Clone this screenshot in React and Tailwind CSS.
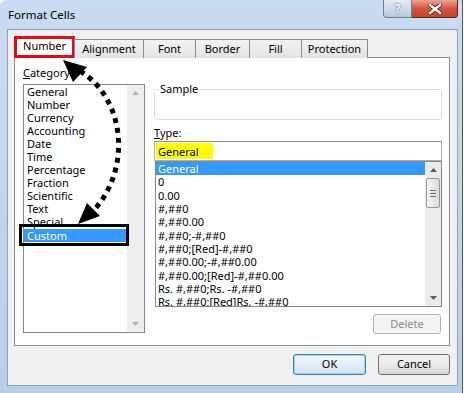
const categories = [
  'General', 'Number', 'Currency', 'Accounting', 'Date', 'Time',
  'Percentage', 'Fraction', 'Scientific', 'Text', 'Special', 'Custom',
];

const types = [
  'General', '0', '0.00', '#,##0', '#,##0.00', '#,##0;-#,##0',
  '#,##0;[Red]-#,##0', '#,##0.00;-#,##0.00', '#,##0.00;[Red]-#,##0.00',
  'Rs. #,##0;Rs. -#,##0', 'Rs. #,##0;[Red]Rs. -#,##0',
];

const tabs = [
  { label: 'Alignment', w: 'w-[70px]' },
  { label: 'Font', w: 'w-[53px]' },
  { label: 'Border', w: 'w-[55px]' },
  { label: 'Fill', w: 'w-[53px]' },
  { label: 'Protection', w: 'w-[67px]' },
];

const Arrow = ({ up, dim }) => (
  <svg width="7" height="4" viewBox="0 0 7 4" className="mx-auto">
    <path d={up ? 'M0 4 L3.5 0 L7 4 Z' : 'M0 0 L3.5 4 L7 0 Z'} fill={dim ? '#b4b4b4' : '#5a5a5a'} />
  </svg>
);

const App = () => {
  return (
    <div
      className="relative w-[467px] h-[393px] bg-white overflow-hidden text-[11px] text-black"
      style={{ fontFamily: '"Noto Sans", "Segoe UI", sans-serif' }}
    >
      <div className="flex flex-col w-[463px] h-[393px] bg-gradient-to-b from-[#c9dcf1] via-[#c2d6ed] to-[#b9cfe8] border-r border-[#4a5566] rounded-tl-[6px]">
        {/* Title bar */}
        <div className="flex h-[29px] shrink-0">
          <div className="pl-[8px] pt-[7px] leading-[16px] text-[11.5px] text-black">Format Cells</div>
          <div className="ml-auto mr-[4px] flex h-[18px]">
            <div className="w-[29px] h-full flex items-center justify-center border border-t-0 border-[#6b7f96] rounded-bl-[4px] bg-gradient-to-b from-[#e3ebf5] via-[#cfdbea] to-[#b6c9df] text-[12px] font-bold text-[#f5f8fb] [text-shadow:0_0_2px_#30455e]">
              ?
            </div>
            <div className="w-[46px] h-full flex items-center justify-center border border-t-0 border-l-0 border-[#5b2620] rounded-br-[4px] bg-gradient-to-b from-[#e8a496] via-[#d2553f] to-[#c8432c]">
              <svg width="14" height="10" viewBox="0 0 14 10">
                <path d="M2 1 L12 9 M12 1 L2 9" stroke="#4a1a12" strokeWidth="4" strokeLinecap="square" />
                <path d="M2 1 L12 9 M12 1 L2 9" stroke="#ffffff" strokeWidth="2.4" strokeLinecap="square" />
              </svg>
            </div>
          </div>
        </div>

        {/* Client area */}
        <div className="ml-[7px] mr-[4px] h-[357px] bg-[#f0f0f0] border border-[#8ea3bb] pt-[7px] pl-[6px] pr-[7px]">
          {/* Tabs */}
          <div className="flex items-end h-[21px] relative z-10">
            <div className="w-[61px] h-[22px] bg-white border-[3px] border-[#e00d16] flex items-center justify-center pb-[1px]">
              Number
            </div>
            {tabs.map((t) => (
              <div
                key={t.label}
                className={`${t.w} h-[19px] -ml-px first:ml-0 flex items-center justify-center border border-b-0 border-[#898c95] bg-gradient-to-b from-[#f2f2f2] to-[#e3e3e3]`}
              >
                {t.label}
              </div>
            ))}
          </div>

          {/* Tab panel */}
          <div className="relative -mt-px h-[289px] bg-white border border-[#898c95] flex">
            {/* Category column */}
            <div className="ml-[8px] pt-[8px] w-[122px]">
              <div className="leading-[13px]">
                <span className="underline">C</span>ategory:
              </div>
              <div className="mt-[5px] h-[249px] border border-[#828790] flex">
                <div className="flex-1 pt-0">
                  {categories.map((c) => (
                    <div
                      key={c}
                      className={`relative h-[13px] leading-[13px] pl-[3px] ${c === 'Custom' ? 'bg-[#3399ff] text-white mt-[1px]' : ''}`}
                    >
                      {c}
                      {c === 'Custom' && (
                        <span className="absolute -left-[5px] -right-[2px] -top-[5px] -bottom-[4px] border-[3px] border-black" />
                      )}
                    </div>
                  ))}
                </div>
                <div className="w-[17px] bg-[#eeeeee] flex flex-col justify-between py-[6px]">
                  <Arrow up dim />
                  <Arrow dim />
                </div>
              </div>
            </div>

            {/* Type column */}
            <div className="ml-[9px] w-[288px]">
              <fieldset className="mt-[24px] h-[38px] border border-[#d5dfe5] rounded-[3px]">
                <legend className="ml-[4px] px-[1px] leading-[14px]">Sample</legend>
              </fieldset>
              <div className="mt-[6px] leading-[14px]">
                <span className="underline">T</span>ype:
              </div>
              <div className="mt-[1px] h-[20px] border border-[#abadb3] border-t-[#8d8f96] flex p-px">
                <span className="bg-[#ffff00] px-[2px] leading-[17px] w-[57px]">General</span>
              </div>
              <div className="ml-px h-[146px] border border-[#828790] flex">
                <div className="flex-1 overflow-hidden">
                  {types.map((t, i) => (
                    <div
                      key={t}
                      className={`h-[13.33px] leading-[13.33px] pl-[2px] whitespace-nowrap ${i === 0 ? 'bg-[#3399ff] text-white' : ''}`}
                    >
                      {t}
                    </div>
                  ))}
                </div>
                <div className="w-[16px] bg-[#ececec] flex flex-col py-[6px]">
                  <Arrow up />
                  <div className="mt-[6px] mx-px h-[30px] rounded-[2px] border border-[#979797] bg-gradient-to-r from-[#f3f3f3] to-[#dcdcdc] flex flex-col items-center justify-center gap-[2px]">
                    <span className="w-[6px] h-px bg-[#707070]" />
                    <span className="w-[6px] h-px bg-[#707070]" />
                    <span className="w-[6px] h-px bg-[#707070]" />
                  </div>
                  <div className="mt-auto">
                    <Arrow />
                  </div>
                </div>
              </div>
              <div className="flex justify-end mt-[7px] pr-[1px]">
                <div className="w-[68px] h-[20px] rounded-[3px] border border-[#adb2b5] bg-[#f4f4f4] text-[#8a8a8a] flex items-center justify-center">
                  Delete
                </div>
              </div>
            </div>

            {/* Annotation arrow */}
            <svg className="absolute -left-[15px] -top-[59px] pointer-events-none" width="160" height="260" viewBox="0 0 160 260">
              <path d="M80 72 C 126 100, 132 172, 92 213" fill="none" stroke="#000" strokeWidth="5" strokeDasharray="5 5" />
              <polygon points="63,61 87,68 73,83" fill="#000" />
              <polygon points="78,225 87,204 100,217" fill="#000" />
            </svg>
          </div>

          {/* Buttons */}
          <div className="flex justify-end gap-[12px] mt-[8px]">
            <div className="w-[73px] h-[21px] rounded-[3px] border border-[#3c7fb1] bg-gradient-to-b from-[#f2f8fc] via-[#e3eef7] to-[#cfe2f0] shadow-[inset_0_0_0_1px_#9fd2f0] flex items-center justify-center">
              OK
            </div>
            <div className="w-[72px] h-[21px] rounded-[3px] border border-[#707070] bg-gradient-to-b from-[#f2f2f2] via-[#ebebeb] to-[#d6d6d6] flex items-center justify-center">
              Cancel
            </div>
          </div>
        </div>
      </div>
    </div>
  );
};

export default App;
